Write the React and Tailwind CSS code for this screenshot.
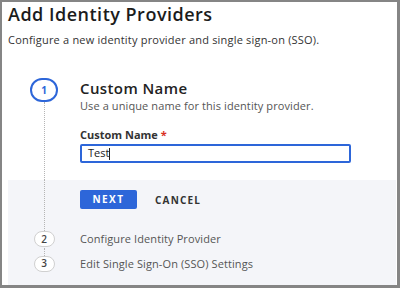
import React from "react";

export default function App() {
  return (
    <div className="w-[400px] h-[288px] bg-white border-l-2 border-t-2 border-r-[3px] border-b-[3px] border-[#858585] flex flex-col font-['Open_Sans',sans-serif] overflow-hidden">
      {/* Header */}
      <div className="pl-[6px] pt-[1px]">
        <h1 className="text-[18px] leading-[22px] font-semibold text-[#1c1c1c] tracking-[0.5px]">
          Add Identity Providers
        </h1>
        <p className="mt-[8px] text-[11px] leading-[14px] text-[#333] tracking-[0.2px]">
          Configure a new identity provider and single sign-on (SSO).
        </p>
      </div>

      <div className="ml-[6px] mr-[1px] mt-[31px] flex-1 flex flex-col">
        {/* Step 1 */}
        <div className="flex">
          <div className="w-[72px] flex flex-col items-center">
            <div className="w-[28px] h-[24px] rounded-full border-2 border-[#2d66d9] flex items-center justify-center text-[10px] font-bold text-[#2d66d9]">
              1
            </div>
            <div className="flex-1 border-l border-dotted border-[#b5b5b5]" />
          </div>
          <div className="flex-1 pb-[17px]">
            <h2 className="text-[15px] leading-[20px] font-semibold text-[#222] tracking-[0.4px]">
              Custom Name
            </h2>
            <p className="mt-[1px] text-[11px] leading-[14px] text-[#555] tracking-[0.1px]">
              Use a unique name for this identity provider.
            </p>
            <label className="block mt-[15px] text-[11px] leading-[14px] font-bold text-[#333]">
              Custom Name <span className="text-[#d93025]">*</span>
            </label>
            <div className="mt-[2px] w-[271px] h-[19px] border-2 border-[#2d66d9] rounded-[2px] flex items-center pl-[6px] text-[11px] text-[#222]">
              Test<span className="w-px h-[12px] bg-[#222]" />
            </div>
          </div>
        </div>

        {/* Gray section */}
        <div className="flex-1 bg-[#f4f5f9] flex flex-col">
          <div className="flex">
            <div className="w-[72px] flex justify-center">
              <div className="border-l border-dotted border-[#b5b5b5] h-[51px]" />
            </div>
            <div className="flex items-start gap-[18px] pt-[10px]">
              <button className="w-[57px] h-[19px] bg-[#2d66d9] rounded-[2px] text-white text-[10px] font-bold tracking-[1.5px]">
                NEXT
              </button>
              <span className="mt-[3px] text-[10px] font-bold tracking-[1.2px] text-[#333]">
                CANCEL
              </span>
            </div>
          </div>
          <div className="flex items-center">
            <div className="w-[72px] flex justify-center">
              <div className="w-[21px] h-[16px] rounded-full border border-[#d0d0d0] bg-white flex items-center justify-center text-[10px] font-semibold text-[#444]">
                2
              </div>
            </div>
            <span className="text-[11px] text-[#555] tracking-[0.1px]">Configure Identity Provider</span>
          </div>
          <div className="flex">
            <div className="w-[72px] flex justify-center">
              <div className="border-l border-dotted border-[#b5b5b5] h-[8px]" />
            </div>
          </div>
          <div className="flex items-center">
            <div className="w-[72px] flex justify-center">
              <div className="w-[21px] h-[16px] rounded-full border border-[#d0d0d0] bg-white flex items-center justify-center text-[10px] font-semibold text-[#444]">
                3
              </div>
            </div>
            <span className="text-[11px] text-[#555] tracking-[0.1px]">Edit Single Sign-On (SSO) Settings</span>
          </div>
        </div>
      </div>
    </div>
  );
}
